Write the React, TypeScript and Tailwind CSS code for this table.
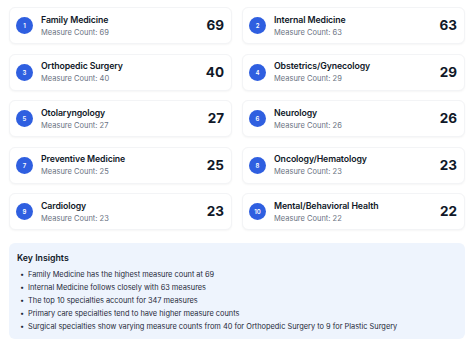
import React from 'react';

const specialties = [
  { name: 'Family Medicine', count: 69 },
  { name: 'Internal Medicine', count: 63 },
  { name: 'Orthopedic Surgery', count: 40 },
  { name: 'Obstetrics/Gynecology', count: 29 },
  { name: 'Otolaryngology', count: 27 },
  { name: 'Neurology', count: 26 },
  { name: 'Preventive Medicine', count: 25 },
  { name: 'Oncology/Hematology', count: 23 },
  { name: 'Cardiology', count: 23 },
  { name: 'Mental/Behavioral Health', count: 22 },
];

const insights = [
  'Family Medicine has the highest measure count at 69',
  'Internal Medicine follows closely with 63 measures',
  'The top 10 specialties account for 347 measures',
  'Primary care specialties tend to have higher measure counts',
  'Surgical specialties show varying measure counts from 40 for Orthopedic Surgery to 9 for Plastic Surgery',
];

export default function App() {
  return (
    <div className="w-[474px] h-[349px] bg-white px-[9px] pt-[7px]" style={{ fontFamily: 'Inter, "Noto Sans", sans-serif' }}>
      <div className="grid grid-cols-2 gap-x-[10px] gap-y-[9.5px]">
        {specialties.map((s, idx) => (
          <div
            key={s.name}
            className="h-[37px] flex items-center justify-between rounded-md border border-gray-100 bg-white shadow-[0_1px_2px_rgba(0,0,0,0.04)] pl-[6px] pr-[7px]"
          >
            <div className="flex items-center">
              <div className="w-[17px] h-[17px] rounded-full bg-[#2f5fe0] text-white text-[6px] font-semibold flex items-center justify-center">
                {idx + 1}
              </div>
              <div className="ml-[8px] leading-none">
                <div className="text-[8.75px] font-semibold text-gray-900 leading-[13px] tracking-[-0.1px]">{s.name}</div>
                <div className="text-[7.5px] text-gray-500 leading-[11px]">Measure Count: {s.count}</div>
              </div>
            </div>
            <div className="text-[13.5px] font-bold text-gray-900">{s.count}</div>
          </div>
        ))}
      </div>
      <div className="mt-[13px] h-[96px] rounded-md bg-[#eef4fd] px-[8px] pt-[9px]">
        <div className="text-[8.75px] font-semibold text-gray-900 leading-[13px]">Key Insights</div>
        <ul className="mt-[3px] pl-[3px]">
          {insights.map((t) => (
            <li key={t} className="flex text-[7.4px] text-gray-800 leading-[13.1px]">
              <span className="w-[8px]">•</span>
              <span>{t}</span>
            </li>
          ))}
        </ul>
      </div>
    </div>
  );
}
